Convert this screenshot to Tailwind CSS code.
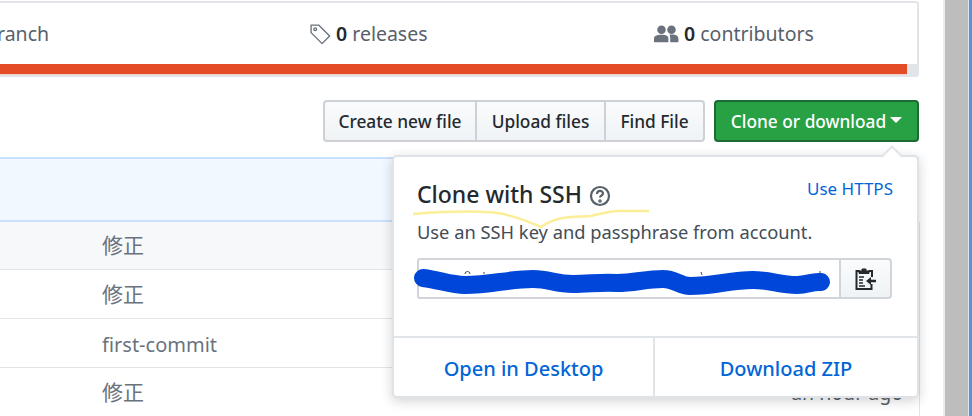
<!DOCTYPE html>
<html lang="ja">
<head>
<meta charset="UTF-8">
<title>Clone or download</title>
<script src="https://cdn.jsdelivr.net/npm/@tailwindcss/browser@4"></script>
</head>
<body class="bg-white overflow-hidden">
<div class="relative flex h-[416px] w-[972px] overflow-hidden font-['Noto_Sans','Noto_Sans_CJK_JP',sans-serif] text-[#24292e]">
  <!-- repo page -->
  <div class="w-[943px] shrink-0 pt-px">
    <div class="ml-[-20px] w-[939px] h-[76px] border-2 border-[#e1e4e8] rounded-[3px] flex flex-col">
      <div class="flex-1 relative text-[19.500px] text-[#586069]">
        <span class="absolute left-[15px] top-[16px]">ranch</span>
        <div class="absolute left-[327px] top-[16px] flex items-center gap-[5px]">
          <svg width="22" height="22" viewBox="0 0 16 16" fill="none" stroke="#6a737d" stroke-width="1"><path d="M1.500 1.500h5.500l8 8-5.500 5.500-8-8z" stroke-linejoin="round"/><circle cx="4.500" cy="4.500" r="1"/></svg>
          <span><b class="font-semibold text-[#24292e]">0</b> releases</span>
        </div>
        <div class="absolute left-[672px] top-[16px] flex items-center gap-[5px]">
          <svg width="25" height="21" viewBox="0 0 20 16" fill="#6a737d"><circle cx="6" cy="5" r="3.400"/><circle cx="14" cy="5" r="3.400"/><path d="M0 15v-3c0-2 2-3 6-3s5.500 1 5.500 3v3z"/><path d="M12.500 9c4-.5 7 .5 7 3v3h-6.500v-3c0-1-.2-2-.5-3z"/></svg>
          <span><b class="font-semibold text-[#24292e]">0</b> contributors</span>
        </div>
      </div>
      <div class="h-[11px] bg-[#e1e4e8] flex"><div class="w-[925px] bg-[#e34c26] border-b border-[#f6cfc4]"></div></div>
    </div>

    <div class="mt-[23px] flex justify-end w-[919px] h-[42px] text-[17.300px] font-medium">
      <div class="flex border-2 border-[#cdd1d6] rounded-[4px] bg-linear-to-b from-[#fafbfc] to-[#eff3f6] text-[#24292e]">
        <span class="w-[150px] pt-px flex items-center justify-center">Create new file</span>
        <span class="w-[129px] pt-px flex items-center justify-center border-l-2 border-[#cdd1d6]">Upload files</span>
        <span class="w-[99px] pt-px flex items-center justify-center border-l-2 border-[#cdd1d6]">Find File</span>
      </div>
      <div class="ml-[9px] w-[205px] pt-px flex items-center justify-center gap-[4px] bg-[#28a044] border-2 border-[#1d6b34] rounded-[4px] text-white">
        Clone or download
        <span class="border-x-[6px] border-x-transparent border-t-[6px] border-t-white mb-[4px]"></span>
      </div>
    </div>

    <div class="mt-[15px] h-[65px] w-[919px] bg-[#f1f8ff] border-y-2 border-[#c8e1ff]"></div>
    <div class="w-[920px] text-[20px] text-[#6a737d] border-r border-[#e1e4e8]">
      <div class="h-[48px] pl-[102px] pt-px flex items-center bg-[#f6f8fa] border-b border-[#e1e4e8] text-[21px]">修正</div>
      <div class="h-[49px] pl-[102px] pt-px flex items-center border-b border-[#e1e4e8] text-[21px]">修正</div>
      <div class="h-[49px] pl-[102px] pt-[3px] flex items-center border-b border-[#e1e4e8]">first-commit</div>
      <div class="h-[49px] pl-[102px] pt-px flex items-center justify-between pr-[16px]"><span class="text-[21px]">修正</span><span class="text-[19.500px] text-[#586069]">an hour ago</span></div>
    </div>
  </div>
  <!-- scrollbar edge -->
  <div class="w-[2px] bg-[#ececec] shrink-0"></div>
  <div class="w-[23px] bg-[#bdbdbd] shrink-0"></div>
  <div class="w-px bg-[#dbe7f5] shrink-0"></div>
  <div class="flex-1 bg-[#5b93d3]"></div>

  <!-- clone popup -->
  <div class="absolute left-[392px] top-[155px] w-[527px] h-[243px] bg-white border-2 border-[#dfe2e6] rounded-[5px] shadow-[0_3px_12px_rgba(27,31,35,0.2)]">
    <div class="absolute left-[487px] top-[-12px] w-0 h-0 border-x-[11px] border-x-transparent border-b-[11px] border-b-[#e1e4e8]"></div>
    <div class="absolute left-[489px] top-[-9px] w-0 h-0 border-x-[9px] border-x-transparent border-b-[9px] border-b-white"></div>
    <div class="px-[23px] pt-[20px]">
      <div class="flex justify-between items-start h-[32px]">
        <div class="flex items-center gap-[7px] text-[23px] font-medium text-[#24292e]">
          Clone with SSH
          <svg class="mt-[4px]" width="22" height="22" viewBox="0 0 22 22" fill="none" stroke="#586069" stroke-width="2.200"><circle cx="11" cy="11" r="9"/><path d="M8 9c0-4 6-4 6-.5 0 2-3 2-3 4"/><circle cx="11" cy="16" r=".7"/></svg>
        </div>
        <span class="mt-[-1px] mr-[1px] text-[17px] text-[#0366d6]">Use HTTPS</span>
      </div>
      <p class="mt-[10px] h-[25px] text-[18.300px] leading-[25px] text-[#444d56]">Use an SSH key and passphrase from account.</p>
      <div class="mt-[14px] flex h-[41px] w-[475px]">
        <div class="flex-1 border-2 border-r-0 border-[#d1d5da] rounded-l-[3px] bg-white"></div>
        <div class="w-[53px] flex items-center justify-center border-2 border-[#d1d5da] rounded-r-[4px] bg-linear-to-b from-[#fafbfc] to-[#eff3f6]">
          <svg width="22" height="24" viewBox="0 0 22 24" fill="none" stroke="#24292e" stroke-width="2"><path d="M5 4H1.500v18h15v-5M17 10V4h-3.500"/><path d="M4 6.500V4h3V2h4v2h3v2.500z" fill="#24292e" stroke-width="1"/><path d="M4 10h5M4 13h4M4 16h4M4 19h6" stroke-width="1.500"/><path d="M21 14h-7" stroke-width="2.500"/><path d="M16 10l-5 4 5 4z" fill="#24292e" stroke="none"/></svg>
        </div>
      </div>
    </div>
    <div class="absolute bottom-0 left-0 right-0 h-[60px] flex border-t-2 border-[#e1e4e8] text-[20px] font-medium text-[#0366d6]">
      <span class="w-[259px] pt-[3px] flex items-center justify-center">Open in Desktop</span>
      <span class="flex-1 pt-[3px] flex items-center justify-center border-l-2 border-[#e1e4e8]">Download ZIP</span>
    </div>
  </div>

  <!-- hand drawn marks -->
  <svg class="absolute left-0 top-0 pointer-events-none" width="972" height="416" fill="none">
    <path d="M413 214C440 212 465 211 486 212C505 212 525 220 541 227C548 222 556 219 563 218C575 216 583 217 591 216C600 214 607 212 616 211C628 211 640 211 649 211" stroke="#fbee96" stroke-width="2.500"/>
    <path d="M465 274a2.500 2.500 0 0 1 5 0M484 272v2M701 272l1 3M820 271v2" stroke="#444d56" stroke-width="1"/>
    <path d="M423 278C440 280 450 285 465 285C490 285 510 279 533 279C550 279 555 284 573 284C590 284 600 282 617 283C635 283 645 279 663 279C675 279 680 286 690 286C715 286 730 280 753 280C770 280 780 285 797 285C808 285 812 281 821 282" stroke="#0047d9" stroke-width="18" stroke-linecap="round" stroke-linejoin="round"/>
  </svg>
</div>
</body>
</html>
